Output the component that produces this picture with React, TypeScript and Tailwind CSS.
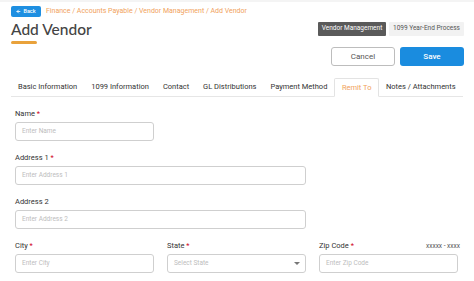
import { ArrowLeft } from 'lucide-react'

const tabs = [
  'Basic Information',
  '1099 Information',
  'Contact',
  'GL Distributions',
  'Payment Method',
  'Remit To',
  'Notes / Attachments',
]

function Label({ text, required }: { text: string; required?: boolean }) {
  return (
    <div className="h-[10px] whitespace-nowrap text-[7.5px] leading-[10px] text-[#333]">
      {text}
      {required && <span className="text-[#d0021b]"> *</span>}
    </div>
  )
}

function Input({ placeholder, className = '' }: { placeholder: string; className?: string }) {
  return (
    <div
      className={`mt-[3px] flex h-[19px] items-center rounded-[3px] border border-[#cfcfcf] bg-white pl-[6px] text-[6.5px] text-[#bdbdbd] ${className}`}
    >
      {placeholder}
    </div>
  )
}

export default function App() {
  const activeTab = 'Remit To'

  return (
    <div
      className="relative h-[281px] w-[474px] overflow-hidden bg-white"
      style={{ fontFamily: 'Roboto, "Liberation Sans", sans-serif' }}
    >
      <div className="h-[2px] bg-[#f4f4f4]" />
      <div className="flex justify-between px-[11px]">
        <div>
          <div className="mt-[4px] flex items-center gap-[5px]">
            <div className="flex h-[11px] w-[30px] items-center justify-center gap-[2px] rounded-[2px] bg-[#1e8fe1] text-[5.5px] font-medium text-white">
              <ArrowLeft className="h-[5px] w-[5px]" strokeWidth={4} />
              <span>Back</span>
            </div>
            <div className="whitespace-nowrap text-[7px] text-[#f1a25c]">
              Finance / Accounts Payable / Vendor Management / Add Vendor
            </div>
          </div>
          <h1
            className="mt-[3px] text-[15.5px] font-medium leading-[18px] text-[#444]"
            style={{ fontFamily: 'Lato, "Open Sans", sans-serif' }}
          >
            Add Vendor
          </h1>
          <div className="mt-[3px] h-[3px] w-[26px] rounded-full bg-[#e9a23b]" />
        </div>
        <div className="mr-[-1px] flex flex-col items-end">
          <div className="mt-[20px] flex gap-[3px]">
            <div className="flex h-[14px] w-[68px] items-center justify-center whitespace-nowrap rounded-[1px] bg-[#5a5a5a] text-[6.5px] text-white">
              Vendor Management
            </div>
            <div className="flex h-[14px] w-[75px] items-center justify-center whitespace-nowrap rounded-[1px] bg-[#f2f2f2] text-[6.5px] text-[#555]">
              1099 Year-End Process
            </div>
          </div>
          <div className="mt-[11px] flex gap-[5px]">
            <button className="flex h-[19px] w-[64px] items-center justify-center rounded-[3px] border border-[#bdbdbd] bg-white text-[8px] text-[#555]">
              Cancel
            </button>
            <button className="flex h-[19px] w-[64px] items-center justify-center rounded-[3px] bg-[#1a8cdf] text-[8px] font-medium text-white">
              Save
            </button>
          </div>
        </div>
      </div>

      <div className="mx-[11px] mt-[13px] flex h-[18px] items-end border-b border-[#e6e6e6]">
        {tabs.map((tab) =>
          tab === activeTab ? (
            <div
              key={tab}
              className="-mb-px flex h-[19px] shrink-0 items-center whitespace-nowrap rounded-t-[2px] border border-b-white border-[#e3e3e3] bg-white px-[6.5px] text-[7.5px] text-[#f1a25c]"
            >
              {tab}
            </div>
          ) : (
            <div
              key={tab}
              className="flex h-[18px] shrink-0 items-center whitespace-nowrap px-[7px] text-[7.5px] text-[#333]"
            >
              {tab}
            </div>
          )
        )}
      </div>

      <div className="px-[15px] pt-[12px]">
        <div className="w-[139px]">
          <Label text="Name" required />
          <Input placeholder="Enter Name" />
        </div>
        <div className="mt-[12px] w-[291px]">
          <Label text="Address 1" required />
          <Input placeholder="Enter Address 1" />
        </div>
        <div className="mt-[12px] w-[291px]">
          <Label text="Address 2" />
          <Input placeholder="Enter Address 2" />
        </div>
        <div className="mt-[12px] grid w-[443px] grid-cols-3 gap-x-[13px]">
          <div>
            <Label text="City" required />
            <Input placeholder="Enter City" />
          </div>
          <div>
            <Label text="State" required />
            <div className="mt-[3px] flex h-[19px] items-center justify-between rounded-[3px] border border-[#cfcfcf] bg-white pl-[6px] pr-[5px] text-[6.5px] text-[#bdbdbd]">
              <span>Select State</span>
              <span className="h-0 w-0 border-x-[3px] border-t-[3px] border-x-transparent border-t-[#777]" />
            </div>
          </div>
          <div>
            <div className="flex justify-between">
              <Label text="Zip Code" required />
              <span className="mr-[-2px] whitespace-nowrap text-[6.5px] leading-[10px] text-[#555]">xxxxx - xxxx</span>
            </div>
            <Input placeholder="Enter Zip Code" />
          </div>
        </div>
      </div>
    </div>
  )
}
